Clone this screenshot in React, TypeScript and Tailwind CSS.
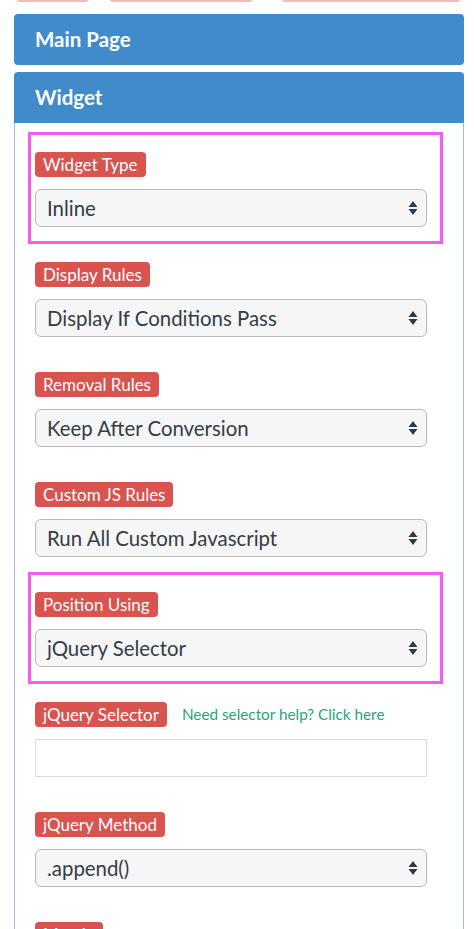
const font = { fontFamily: 'Lato, "Open Sans", sans-serif' }

function Arrows() {
  return (
    <svg width="10" height="16" viewBox="0 0 10 16" className="shrink-0">
      <path d="M5 1 L9.5 7 H0.5 Z" fill="#2f3a45" />
      <path d="M5 15 L9.5 9 H0.5 Z" fill="#2f3a45" />
    </svg>
  )
}

function Badge({ children }: { children: React.ReactNode }) {
  return (
    <span className="inline-flex h-[25px] items-center rounded-[4px] bg-[#d9534f] px-[8px] text-[17px] leading-none text-white">
      {children}
    </span>
  )
}

function SelectBox({ value }: { value: string }) {
  return (
    <div className="flex h-[38px] items-center justify-between rounded-[6px] border border-[#b9b9b9] bg-[#f6f6f6] pl-[11px] pr-[8px]">
      <span className="text-[20.4px] leading-none text-[#333d48]">{value}</span>
      <Arrows />
    </div>
  )
}

function Group({ label, value, link, highlight }: { label: string; value?: string; link?: string; highlight?: boolean }) {
  const inner = (
    <div className="flex flex-col gap-[12px]">
      <div className="flex items-center gap-[15px]">
        <Badge>{label}</Badge>
        {link && <span className="text-[15.3px] text-[#1fa67a]">{link}</span>}
      </div>
      {value !== undefined ? (
        <SelectBox value={value} />
      ) : (
        <div className="h-[38px] border border-[#dcdcdc] bg-white" />
      )}
    </div>
  )
  if (!highlight) return inner
  return (
    <div className="-mb-[17px] -ml-[7px] -mr-[16px] -mt-[20px] border-[3px] border-[#f45cf2] pb-[14px] pl-[4px] pr-[13px] pt-[17px]">
      {inner}
    </div>
  )
}

export default function App() {
  return (
    <div className="h-[929px] w-[474px] overflow-hidden bg-white" style={font}>
      <div className="flex h-[2px] gap-0">
        <div className="ml-[17px] w-[71px] rounded-b-[3px] bg-[#f2bcbc]" />
        <div className="ml-[22px] w-[142px] rounded-b-[3px] bg-[#f2bcbc]" />
        <div className="ml-[30px] w-[178px] rounded-b-[3px] bg-[#f2bcbc]" />
      </div>
      <div className="ml-[14px] mr-[10px] mt-[12px] flex h-[51px] items-center rounded-[4px] bg-[#428bca] px-[21px]">
        <span className="text-[20.5px] font-bold text-white">Main Page</span>
      </div>
      <div className="ml-[14px] mr-[10px] mt-[7px]">
        <div className="flex h-[51px] items-center rounded-t-[4px] bg-[#428bca] px-[21px]">
          <span className="text-[20.5px] font-bold text-white">Widget</span>
        </div>
        <div className="flex flex-col gap-[35px] border-x border-[#9cc0e3] pb-[40px] pl-[20px] pr-[36px] pt-[29px]">
          <Group label="Widget Type" value="Inline" highlight />
          <Group label="Display Rules" value="Display If Conditions Pass" />
          <Group label="Removal Rules" value="Keep After Conversion" />
          <Group label="Custom JS Rules" value="Run All Custom Javascript" />
          <Group label="Position Using" value="jQuery Selector" highlight />
          <Group label="jQuery Selector" link="Need selector help? Click here" />
          <Group label="jQuery Method" value=".append()" />
          <Group label="Margin" link="top, right, bottom, left" value="0px 0px 0px 0px" />
        </div>
      </div>
    </div>
  )
}
